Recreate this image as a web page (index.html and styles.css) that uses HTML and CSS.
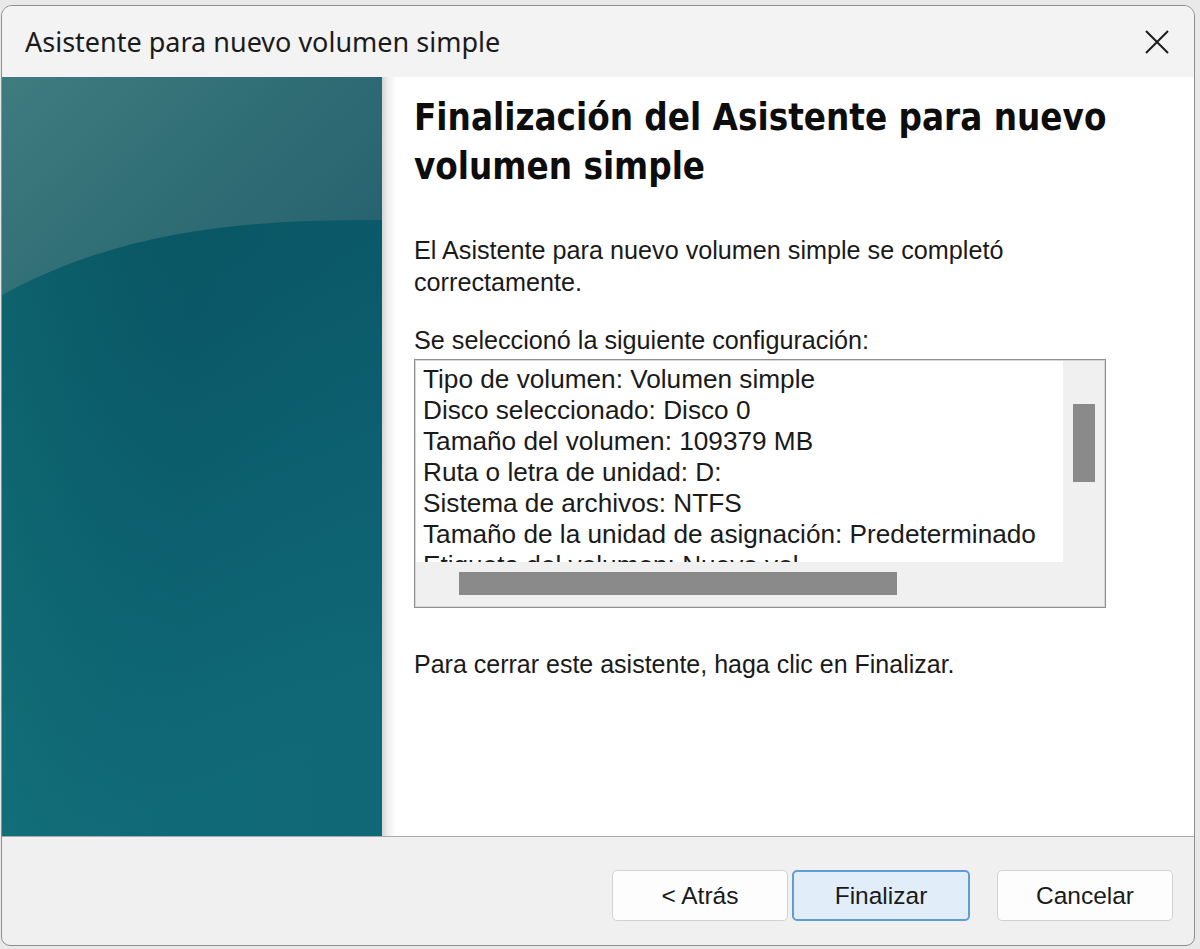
FILE: index.html
```html
<!DOCTYPE html>
<html lang="es">
<head>
  <meta charset="UTF-8" />
  <title>Asistente para nuevo volumen simple</title>
  <link rel="stylesheet" href="styles.css">
</head>
<body>
  <div class="window">
    <div class="titlebar">
      <span class="title">Asistente para nuevo volumen simple</span>
      <span class="close">
        <svg width="24" height="24" viewBox="0 0 24 24">
          <path d="M1 1 L23 23 M23 1 L1 23" stroke="#1c1c1c" stroke-width="2" fill="none" />
        </svg>
      </span>
    </div>

    <div class="main">
      <div class="banner">
        <svg width="380" height="759" viewBox="0 0 380 759" preserveAspectRatio="none">
          <defs>
            <linearGradient id="deep" x1="0" y1="0" x2="0.2" y2="1">
              <stop offset="0" stop-color="#08525f" />
              <stop offset="0.4" stop-color="#0a5867" />
              <stop offset="1" stop-color="#106977" />
            </linearGradient>
            <linearGradient id="deepSide" x1="0" y1="0" x2="1" y2="0">
              <stop offset="0" stop-color="#16807f" stop-opacity="0.3" />
              <stop offset="0.5" stop-color="#0f6a78" stop-opacity="0" />
              <stop offset="1" stop-color="#0f6278" stop-opacity="0.15" />
            </linearGradient>
            <linearGradient id="glow" x1="0" y1="0" x2="1" y2="0.6">
              <stop offset="0" stop-color="#3e7c80" />
              <stop offset="0.6" stop-color="#2f6d75" />
              <stop offset="1" stop-color="#28646f" />
            </linearGradient>
          </defs>
          <rect width="380" height="759" fill="url(#deep)" />
          <rect width="380" height="759" fill="url(#deepSide)" />
          <path d="M0 0 H380 V143 C 250 142 120 152 0 218 Z" fill="url(#glow)" />
        </svg>
      </div>

      <div class="content">
        <h1>Finalización del Asistente para nuevo volumen simple</h1>

        <p class="lead">El Asistente para nuevo volumen simple se completó correctamente.</p>

        <p class="label">Se seleccionó la siguiente configuración:</p>

        <div class="listbox">
          <div class="lines">
            <div>Tipo de volumen: Volumen simple</div>
            <div>Disco seleccionado: Disco 0</div>
            <div>Tamaño del volumen: 109379 MB</div>
            <div>Ruta o letra de unidad: D:</div>
            <div>Sistema de archivos: NTFS</div>
            <div>Tamaño de la unidad de asignación: Predeterminado</div>
            <div>Etiqueta del volumen: Nuevo vol</div>
          </div>
          <div class="vtrack"><div class="vthumb"></div></div>
          <div class="htrack"><div class="hthumb"></div></div>
        </div>

        <p class="closing">Para cerrar este asistente, haga clic en Finalizar.</p>
      </div>
    </div>

    <div class="footer">
      <button class="btn">&lt; Atrás</button>
      <button class="btn primary">Finalizar</button>
      <button class="btn cancel">Cancelar</button>
    </div>
  </div>
</body>
</html>
```

FILE: styles.css
```css
body {
  margin: 0;
  padding: 5px 5px 0 1px;
  background: #e9e9e9;
  font-family: 'Liberation Sans', Arial, sans-serif;
  color: #1a1a1a;
}

.window {
  width: 1194px;
  height: 941px;
  box-sizing: border-box;
  border: 1px solid #8e8e8e;
  border-radius: 11px 11px 9px 9px;
  background: #f0f0f0;
  overflow: hidden;
  display: flex;
  flex-direction: column;
}

.titlebar {
  height: 71px;
  flex: none;
  display: flex;
  align-items: center;
  justify-content: space-between;
  padding: 0 25px 0 23px;
  background: #f3f3f3;
}

.title {
  font-family: 'Noto Sans', 'Open Sans', sans-serif;
  font-size: 27px;
  color: #1b1b1b;
}

.close {
  display: flex;
  width: 24px;
  height: 24px;
}

.main {
  height: 759px;
  flex: none;
  display: flex;
  border-bottom: 1px solid #a9a9a9;
}

.banner {
  width: 380px;
  flex: none;
  display: flex;
}

.content {
  flex: 1;
  padding: 16px 0 0 32px;
  background: linear-gradient(to right, #d4d4d4 0, #eeeeee 6px, #ffffff 14px);
}

h1 {
  margin: 0;
  width: 730px;
  font-family: 'DejaVu Sans Condensed', 'DejaVu Sans', sans-serif;
  font-stretch: condensed;
  font-weight: bold;
  font-size: 36.4px;
  line-height: 49px;
  color: #0d0d0d;
}

.lead,
.label,
.closing {
  margin: 0;
  width: 700px;
  font-size: 25.2px;
  line-height: 32px;
}

.lead {
  margin-top: 43px;
}

.label {
  margin-top: 26px;
}

.listbox {
  margin-top: 3px;
  width: 692px;
  height: 249px;
  box-sizing: border-box;
  border: 1px solid #8f8f8f;
  box-shadow: inset 0 0 0 1px #d6d6d6;
  display: grid;
  grid-template-columns: 1fr 42px;
  grid-template-rows: 202px 1fr;
  background: #f0f0f0;
}

.lines {
  background: #fff;
  margin: 1px 0 0 1px;
  padding: 3px 0 0 7px;
  overflow: hidden;
  font-size: 26.2px;
  line-height: 31px;
  white-space: nowrap;
}

.vtrack {
  display: flex;
  justify-content: center;
}

.vthumb {
  width: 22px;
  height: 78px;
  margin-top: 44px;
  background: #8a8a8a;
}

.htrack {
  grid-column: 1 / 3;
}

.hthumb {
  width: 438px;
  height: 23px;
  margin: 10px 0 0 44px;
  background: #8a8a8a;
}

.closing {
  margin-top: 40px;
  font-size: 25px;
}

.footer {
  flex: 1;
  display: flex;
  align-items: flex-start;
  padding: 33px 21px 0 0;
  justify-content: flex-end;
}

.btn {
  width: 176px;
  height: 51px;
  box-sizing: border-box;
  border: 1px solid #d2d2d2;
  border-radius: 5px;
  background: #fdfdfd;
  font-family: 'Liberation Sans', Arial, sans-serif;
  font-size: 24.5px;
  color: #1a1a1a;
  padding: 0;
}

.primary {
  width: 178px;
  margin-left: 4px;
  border: 2px solid #5f9dd6;
  background: #e1eefa;
}

.cancel {
  margin-left: 27px;
}
```
